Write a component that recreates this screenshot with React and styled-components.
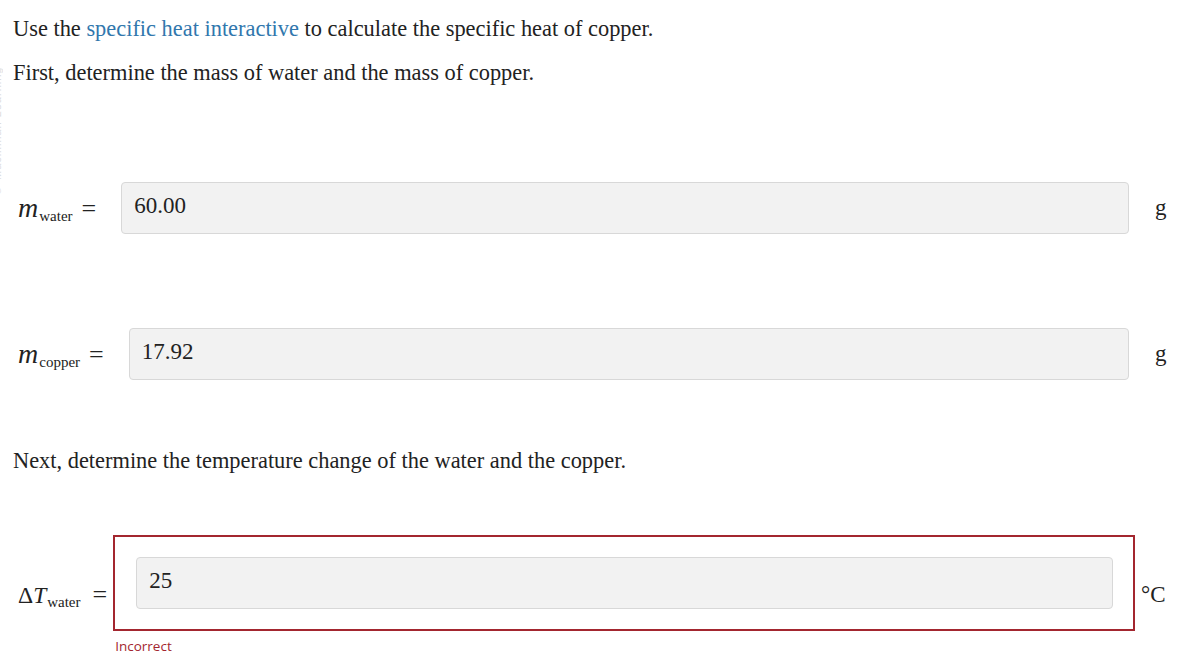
import React from "react";
import styled, { createGlobalStyle } from "styled-components";

const GlobalStyle = createGlobalStyle`
  html, body {
    margin: 0;
    padding: 0;
    background: #ffffff;
  }
  body {
    font-family: "Liberation Serif", "Times New Roman", serif;
    color: #222222;
  }
`;

const Page = styled.div`
  position: relative;
  padding: 13px 0 0 13px;
  width: 1164px;
`;

const Watermark = styled.div`
  position: absolute;
  left: -9px;
  top: 22px;
  writing-mode: vertical-rl;
  transform: rotate(180deg);
  font-family: "Liberation Sans", Arial, sans-serif;
  font-size: 11px;
  letter-spacing: 1px;
  color: #dcdcdc;
  height: 175px;
  white-space: nowrap;
  overflow: hidden;
`;

const Para = styled.p`
  margin: ${(p) => p.$margin || "0 0 13px"};
  font-size: 22.4px;
  line-height: 31px;
`;

const Link = styled.a`
  color: #3177ad;
  text-decoration: none;
`;

const Row = styled.div`
  display: flex;
  align-items: center;
  margin: ${(p) => p.$margin};
  padding-left: 5px;
`;

const Label = styled.div`
  font-size: 23.5px;
  white-space: nowrap;
  line-height: 1;

  sub {
    font-size: 15px;
    vertical-align: -4px;
    line-height: 0;
    margin-left: 1px;
  }
`;

const Sym = styled.i`
  font-style: italic;
  font-size: ${(p) => p.$size}px;
`;

const Eq = styled.span`
  font-size: 26px;
  margin-left: ${(p) => p.$space}px;
`;

const Field = styled.div`
  flex: 1;
  display: flex;
  flex-direction: column;
  margin-left: ${(p) => p.$gap}px;
`;

const Box = styled.div`
  border: 2px solid ${(p) => (p.$error ? "#a3262f" : "transparent")};
  padding: 20px 20px 20px 21px;
`;

const Input = styled.input`
  box-sizing: border-box;
  width: 100%;
  height: 52px;
  padding: 0 12px 4px;
  background: #f2f2f2;
  border: 1px solid #d8d8d8;
  border-radius: 4px;
  font-family: "Liberation Serif", "Times New Roman", serif;
  font-size: 23px;
  color: #222222;
  outline: none;
`;

const Message = styled.div`
  font-family: "Open Sans", "Liberation Sans", sans-serif;
  font-size: 13.5px;
  color: #a3262f;
  margin-top: 6px;
  padding-left: 2px;
  height: 18px;
`;

const Unit = styled.div`
  font-size: 23px;
  width: ${(p) => p.$width}px;
  padding-left: ${(p) => p.$pad}px;
  box-sizing: border-box;
`;

function Quantity({
  symbol,
  sub,
  value,
  unit,
  error,
  gap,
  eqSpace,
  margin,
  unitPad,
  unitWidth,
}) {
  return (
    <Row $margin={margin}>
      <Label>
        {symbol}
        <sub>{sub}</sub>
        <Eq $space={eqSpace}>=</Eq>
      </Label>
      <Field $gap={gap}>
        <Box $error={error}>
          <Input defaultValue={value} />
        </Box>
        {error && <Message>Incorrect</Message>}
      </Field>
      <Unit $width={unitWidth} $pad={unitPad}>
        {unit}
      </Unit>
    </Row>
  );
}

export default function App() {
  return (
    <>
      <GlobalStyle />
      <Page>
        <Watermark>© Macmillan Learning</Watermark>
        <Para>
          Use the <Link href="#">specific heat interactive</Link> to calculate
          the specific heat of copper.
        </Para>
        <Para>First, determine the mass of water and the mass of copper.</Para>
        <Quantity
          symbol={<Sym $size={28}>m</Sym>}
          sub="water"
          value="60.00"
          unit="g"
          gap={2}
          eqSpace={9}
          unitPad={4}
          unitWidth={26}
          margin="72px 0 0"
        />
        <Quantity
          symbol={<Sym $size={28}>m</Sym>}
          sub="copper"
          value="17.92"
          unit="g"
          gap={2}
          eqSpace={9}
          unitPad={4}
          unitWidth={26}
          margin="50px 0 0"
        />
        <Para $margin="43px 0 0">
          Next, determine the temperature change of the water and the copper.
        </Para>
        <Quantity
          symbol={
            <>
              Δ<Sym $size={23.5}>T</Sym>
            </>
          }
          sub="water"
          value="25"
          unit="°C"
          error
          gap={6}
          eqSpace={12}
          unitPad={6}
          unitWidth={42}
          margin="59px 0 0"
        />
      </Page>
    </>
  );
}
